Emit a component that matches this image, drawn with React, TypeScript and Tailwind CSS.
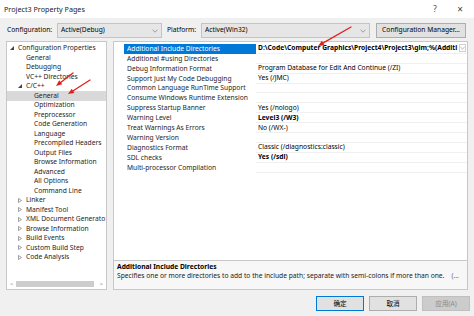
type TreeItem = {
  label: string;
  level: number;
  toggle?: "open" | "closed";
  selected?: boolean;
};

const treeItems: TreeItem[] = [
  { label: "Configuration Properties", level: 0, toggle: "open" },
  { label: "General", level: 1 },
  { label: "Debugging", level: 1 },
  { label: "VC++ Directories", level: 1 },
  { label: "C/C++", level: 1, toggle: "open" },
  { label: "General", level: 2, selected: true },
  { label: "Optimization", level: 2 },
  { label: "Preprocessor", level: 2 },
  { label: "Code Generation", level: 2 },
  { label: "Language", level: 2 },
  { label: "Precompiled Headers", level: 2 },
  { label: "Output Files", level: 2 },
  { label: "Browse Information", level: 2 },
  { label: "Advanced", level: 2 },
  { label: "All Options", level: 2 },
  { label: "Command Line", level: 2 },
  { label: "Linker", level: 1, toggle: "closed" },
  { label: "Manifest Tool", level: 1, toggle: "closed" },
  { label: "XML Document Generato", level: 1, toggle: "closed" },
  { label: "Browse Information", level: 1, toggle: "closed" },
  { label: "Build Events", level: 1, toggle: "closed" },
  { label: "Custom Build Step", level: 1, toggle: "closed" },
  { label: "Code Analysis", level: 1, toggle: "closed" },
];

const properties = [
  { name: "Additional Include Directories", value: "D:\\Code\\Computer Graphics\\Project4\\Project3\\glm;%(Additi", bold: true },
  { name: "Additional #using Directories", value: "" },
  { name: "Debug Information Format", value: "Program Database for Edit And Continue (/ZI)" },
  { name: "Support Just My Code Debugging", value: "Yes (/JMC)" },
  { name: "Common Language RunTime Support", value: "" },
  { name: "Consume Windows Runtime Extension", value: "" },
  { name: "Suppress Startup Banner", value: "Yes (/nologo)" },
  { name: "Warning Level", value: "Level3 (/W3)", bold: true },
  { name: "Treat Warnings As Errors", value: "No (/WX-)" },
  { name: "Warning Version", value: "" },
  { name: "Diagnostics Format", value: "Classic (/diagnostics:classic)" },
  { name: "SDL checks", value: "Yes (/sdl)", bold: true },
  { name: "Multi-processor Compilation", value: "" },
];

const levelPad = ["pl-[3px]", "pl-[11px]", "pl-[19px]"];

function Chevron({ className = "" }: { className?: string }) {
  return (
    <svg width="6" height="4" viewBox="0 0 6 4" className={className}>
      <path d="M0.5 0.8 L3 3.2 L5.5 0.8" fill="none" stroke="#8a8a8a" strokeWidth="0.8" />
    </svg>
  );
}

function Toggle({ kind }: { kind?: "open" | "closed" }) {
  if (kind === "open")
    return (
      <svg width="4" height="4" viewBox="0 0 4 4">
        <path d="M4 0 L4 4 L0 4 Z" fill="#444" />
      </svg>
    );
  if (kind === "closed")
    return (
      <svg width="4" height="5" viewBox="0 0 4 5">
        <path d="M0.5 0.5 L3.5 2.5 L0.5 4.5 Z" fill="none" stroke="#777" strokeWidth="0.7" />
      </svg>
    );
  return null;
}

export default function App() {
  return (
    <div className="relative w-[474px] h-[316px] overflow-hidden bg-[#f0f0f0] text-[6.7px] text-black font-['Noto_Sans','Noto_Sans_CJK_SC',sans-serif]">
      {/* title bar */}
      <div className="flex items-center h-[18px] bg-white pl-[4px]">
        <span className="text-[7.2px] text-[#222]">Project3 Property Pages</span>
        <span className="ml-auto w-[10px] text-center text-[8px] text-[#444]">?</span>
        <span className="ml-[15px] mr-[9px] w-[10px] text-center text-[10px] leading-none text-[#444]">×</span>
      </div>

      {/* configuration row */}
      <div className="flex items-center h-[15px] mt-[5px] pl-[7px]">
        <span className="w-[50px]">Configuration:</span>
        <div className="flex items-center w-[105px] h-full pl-[3px] pr-[3px] bg-[#e6e6e6] border border-[#c4c4c4]">
          <span>Active(Debug)</span>
          <Chevron className="ml-auto" />
        </div>
        <span className="w-[34px] pl-[5px] box-content">Platform:</span>
        <div className="flex items-center w-[169px] h-full pl-[3px] pr-[3px] bg-[#e6e6e6] border border-[#c4c4c4]">
          <span>Active(Win32)</span>
          <Chevron className="ml-auto" />
        </div>
        <button className="ml-[6px] w-[90px] h-full bg-[#e1e1e1] border border-[#adadad] text-center">
          Configuration Manager...
        </button>
      </div>

      {/* main area */}
      <div className="flex gap-[6px] px-[6px] mt-[3px] h-[249px]">
        {/* tree */}
        <div className="flex flex-col w-[101px] bg-white border border-[#c8c8c8]">
          <div className="flex-1 pt-[1.5px] overflow-hidden">
            {treeItems.map((item, i) => (
              <div
                key={i}
                className={`flex items-center h-[9.5px] whitespace-nowrap overflow-hidden ${levelPad[item.level]} ${
                  item.selected ? "bg-[#d9d9d9]" : ""
                }`}
              >
                <span className="flex items-center w-[8px] shrink-0">
                  <Toggle kind={item.toggle} />
                </span>
                <span className="text-[#1e1e1e]">{item.label}</span>
              </div>
            ))}
          </div>
          <div className="flex items-center h-[8px] mb-[1px] px-[3px] text-[6px] text-[#777]">
            <span className="w-[6px]">&lt;</span>
            <div className="h-[6px] w-[78px] bg-[#cdcdcd]" />
            <span className="ml-auto">&gt;</span>
          </div>
        </div>

        {/* property grid */}
        <div className="flex flex-col w-[355px] bg-white border border-[#c8c8c8]">
          <div className="flex-1 pt-[2px]">
            {properties.map((p, i) => (
              <div key={i} className="flex h-[9.9px] items-stretch">
                <div className="w-[10px] shrink-0" />
                <div
                  className={`flex items-center w-[132px] shrink-0 pl-[3px] whitespace-nowrap ${
                    i === 0 ? "bg-[#0078d7] text-white" : "text-[#1e1e1e]"
                  }`}
                >
                  {p.name}
                </div>
                <div className="flex items-center flex-1 min-w-0 pl-[2px] border-b border-[#f0f0f0]">
                  <span className={`whitespace-nowrap ${p.bold ? "font-bold" : ""}`}>{p.value}</span>
                  {i === 0 && (
                    <span className="ml-auto flex items-center justify-center shrink-0 w-[7px] h-[8px] mr-[1px] border border-[#d0d0d0] bg-white">
                      <Chevron />
                    </span>
                  )}
                </div>
              </div>
            ))}
          </div>
          <div className="h-[29px] border-t border-[#c8c8c8] bg-[#f7f7f7] pl-[3px] pt-[1px]">
            <div className="font-bold h-[9px] leading-[9px]">Additional Include Directories</div>
            <div className="flex h-[9px] leading-[9px] text-[#222]">
              <span>
                Specifies one or more directories to add to the include path; separate with semi-colons if more than
                one.
              </span>
              <span className="ml-[7px] text-[#666]">(...</span>
            </div>
          </div>
        </div>
      </div>

      {/* dialog buttons */}
      <div className="flex justify-end gap-[5px] pr-[4px] mt-[6px] h-[15px]">
        <button className="w-[48px] h-full bg-[#e1e1e1] border border-[#0078d7] text-[6.6px]">确定</button>
        <button className="w-[48px] h-full bg-[#e1e1e1] border border-[#adadad] text-[6.6px]">取消</button>
        <button className="w-[48px] h-full bg-[#cccccc] border border-[#bfbfbf] text-[6.6px] text-[#8a8a8a]">
          应用(A)
        </button>
      </div>

      {/* red annotation arrows */}
      <svg className="absolute inset-0 pointer-events-none" width="474" height="316" viewBox="0 0 474 316">
        <g stroke="#e0201c" strokeWidth="1.3" fill="#e0201c" strokeLinecap="round">
          <line x1="351" y1="27" x2="322" y2="43.6" />
          <polygon points="318,46 324.45,45.17 321.95,40.83" stroke="none" />
          <line x1="73" y1="73" x2="60" y2="83" />
          <polygon points="56,86 62.28,84.35 59.24,80.37" stroke="none" />
          <line x1="90" y1="80" x2="72" y2="91.5" />
          <polygon points="68,94 74.4,92.89 71.72,88.67" stroke="none" />
        </g>
      </svg>
    </div>
  );
}
